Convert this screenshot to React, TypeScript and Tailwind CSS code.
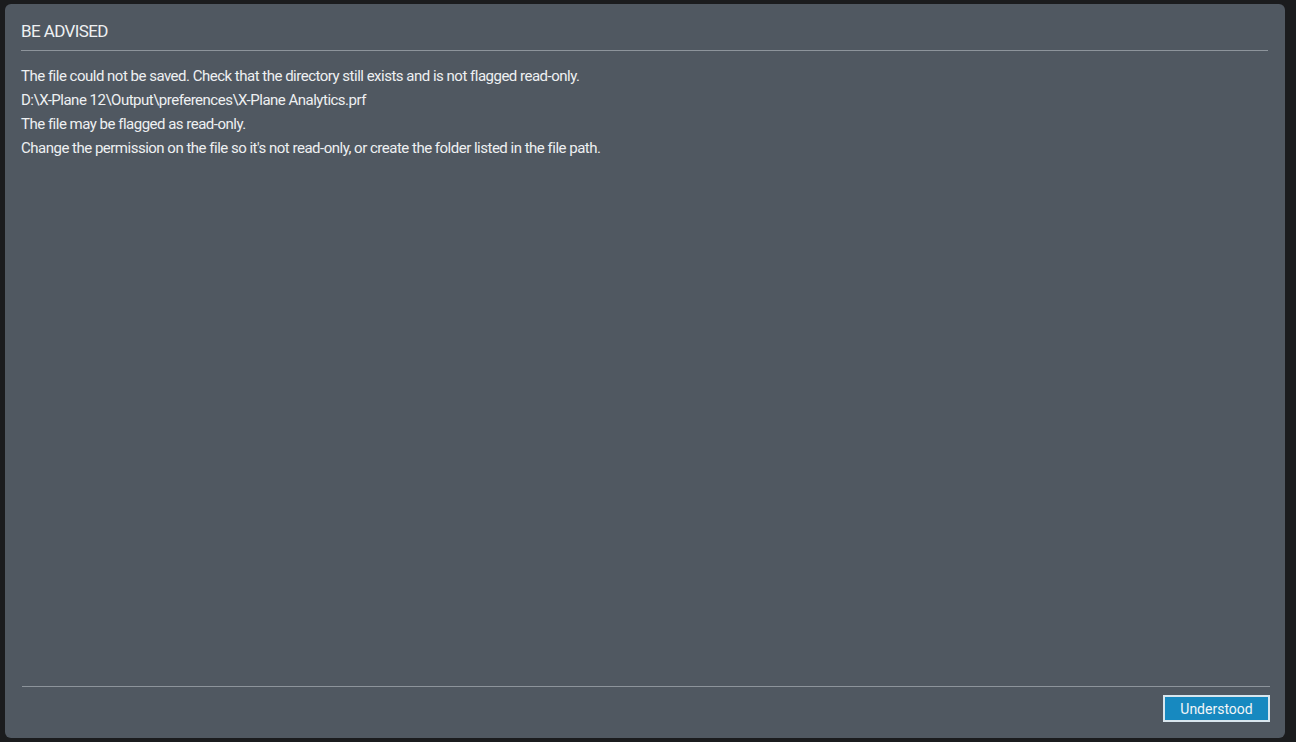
import React from 'react';

const lines = [
  'The file could not be saved. Check that the directory still exists and is not flagged read-only.',
  'D:\\X-Plane 12\\Output\\preferences\\X-Plane Analytics.prf',
  'The file may be flagged as read-only.',
  "Change the permission on the file so it's not read-only, or create the folder listed in the file path.",
];

const App = () => {
  return (
    <div className="w-[1296px] h-[742px] bg-[#1b1c1e] pt-[4px] pl-[5px] pr-[11px] pb-[4px] font-['Roboto',sans-serif]">
      <div className="w-full h-full rounded-[6px] bg-[#505861] flex flex-col pl-[16px] pr-[17px]">
        <h1 className="pt-[17px] h-[47px] text-[17px] leading-[20px] text-[#eef0f2] tracking-[-0.6px] border-b border-[#8d949b]">
          BE ADVISED
        </h1>
        <div className="pt-[13px] flex flex-col text-[15px] leading-[24px] text-[#eef0f2] tracking-[-0.5px]">
          {lines.map((line) => (
            <p key={line}>{line}</p>
          ))}
        </div>
        <div className="mt-auto border-t border-[#8d949b] ml-[1px] flex justify-end pt-[8px] pb-[16px] -mr-[2px]">
          <button className="w-[107px] h-[27px] bg-[#1789c0] border-2 border-[#d8e6ee] text-[14px] text-[#f2f6f8] leading-none">
            Understood
          </button>
        </div>
      </div>
    </div>
  );
};

export default App;
